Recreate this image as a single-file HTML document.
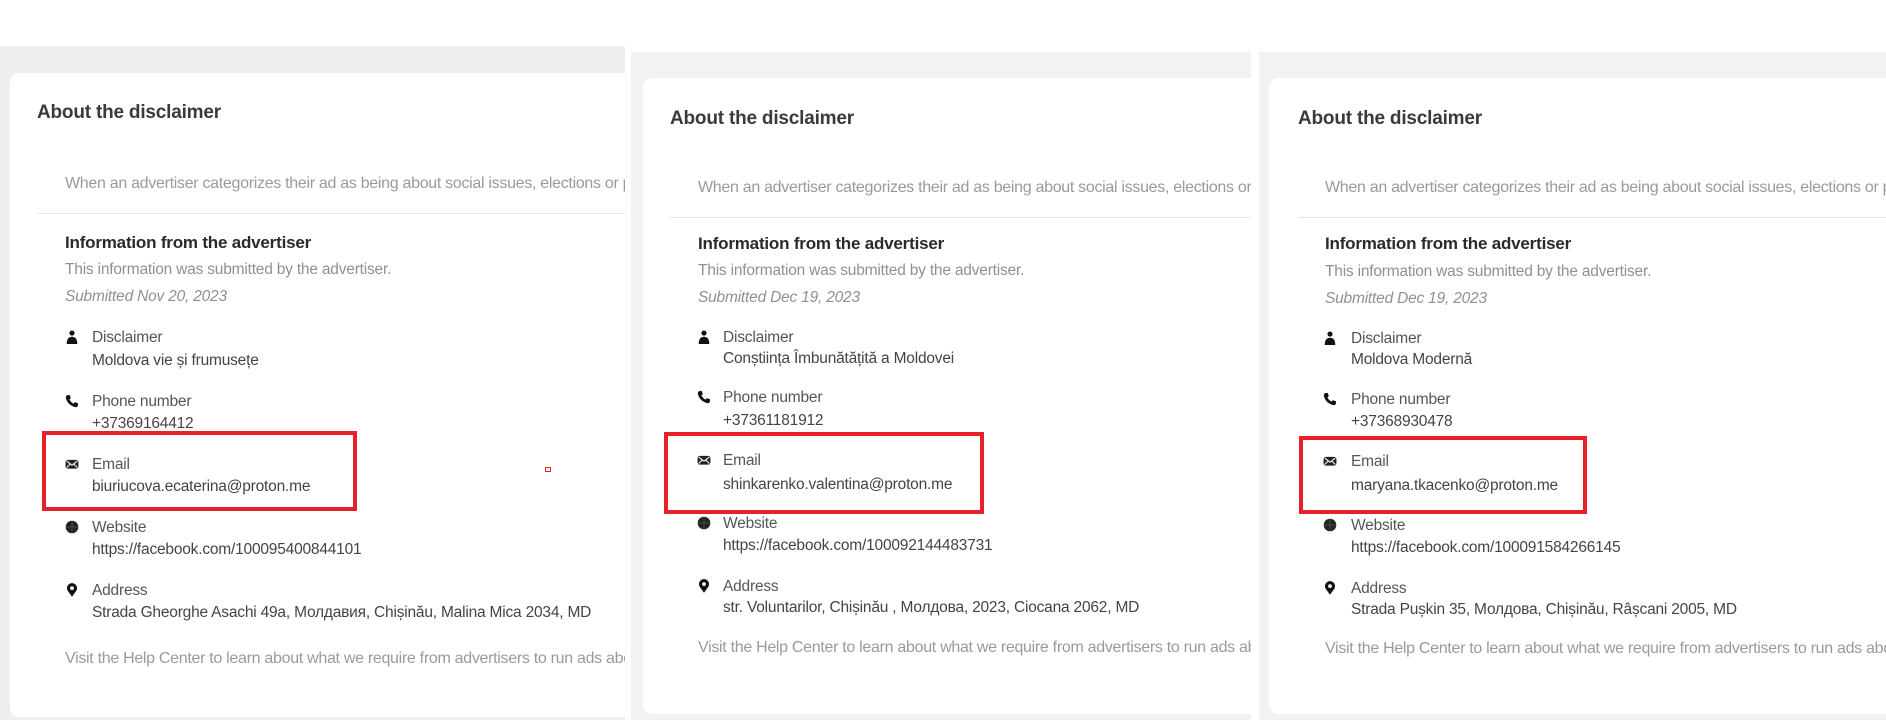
<!DOCTYPE html>
<html><head><meta charset="utf-8"><style>
*{margin:0;padding:0;box-sizing:border-box}
body{width:1886px;height:720px;background:#fff;position:relative;overflow:hidden;font-family:"Liberation Sans",Arial,sans-serif}
.panel{position:absolute;overflow:hidden}
.card{position:absolute;background:#fff;border-radius:9px;width:760px}
.t{position:absolute;white-space:nowrap;line-height:20px}
.title{font-size:19px;font-weight:bold;color:#3a3a3a;letter-spacing:-0.2px}
.desc{font-size:16px;color:#9a9a9a;letter-spacing:-0.3px}
.div{position:absolute;height:1px;background:#e6e6e6;width:740px}
.head{font-size:17px;font-weight:bold;color:#2a2a2a;letter-spacing:-0.2px}
.sub{font-size:15.5px;color:#909090;letter-spacing:-0.2px}
.it{font-style:italic}
.lab{font-size:15.5px;color:#555;letter-spacing:-0.2px}
.val{font-size:15.5px;color:#444;letter-spacing:-0.2px}
.ic{position:absolute;width:14px;height:14px}
.red{position:absolute;border:4px solid #e8202a}
</style></head><body>

<!-- Panel 1 -->
<div class="panel" style="left:0;top:46px;width:625px;height:674px;background:#efefef">
 <div class="card" style="left:10px;top:27px;height:644px">
  <div class="t title" style="left:27px;top:30px">About the disclaimer</div>
  <div class="t desc" style="left:55px;top:101px">When an advertiser categorizes their ad as being about social issues, elections or politics, they are required to...</div>
  <div class="div" style="left:27px;top:140px"></div>
  <div class="t head" style="left:55px;top:160px">Information from the advertiser</div>
  <div class="t sub" style="left:55px;top:187px">This information was submitted by the advertiser.</div>
  <div class="t sub it" style="left:55px;top:214px">Submitted Nov 20, 2023</div>
  <svg class="ic" style="left:55px;top:257px" viewBox="0 0 12 12"><circle cx="6" cy="2.6" r="2.2" fill="#111"/><path d="M1.5 12 Q1.5 5.8 6 5.8 Q10.5 5.8 10.5 12Z" fill="#111"/></svg>
  <div class="t lab" style="left:82px;top:255px">Disclaimer</div>
  <div class="t val" style="left:82px;top:278px">Moldova vie și frumusețe</div>
  <svg class="ic" style="left:55px;top:321px" viewBox="0 0 12 12"><path d="M2 1 L4 0.8 L5 3.5 L3.8 4.6 Q5 7.2 7.4 8.2 L8.5 7 L11.2 8 L11 10.2 Q10.5 11.5 9 11.3 Q2 9.5 0.7 3 Q0.6 1.5 2 1Z" fill="#111"/></svg>
  <div class="t lab" style="left:82px;top:319px">Phone number</div>
  <div class="t val" style="left:82px;top:341px">+37369164412</div>
  <svg class="ic" style="left:55px;top:384px" viewBox="0 0 12 12"><rect x="0.5" y="2.5" width="11" height="7.5" rx="2" fill="#222"/><path d="M1.5 3.5 L6 7 L10.5 3.5 M1.5 9 L4.5 6 M10.5 9 L7.5 6" stroke="#fff" stroke-width="0.9" fill="none"/></svg>
  <div class="t lab" style="left:82px;top:382px">Email</div>
  <div class="t val" style="left:82px;top:404px">biuriucova.ecaterina@proton.me</div>
  <svg class="ic" style="left:55px;top:447px" viewBox="0 0 12 12"><circle cx="6" cy="6" r="5.4" fill="#222"/><path d="M6 0.8 V11.2 M0.8 6 H11.2" stroke="#555" stroke-width="0.7"/></svg>
  <div class="t lab" style="left:82px;top:445px">Website</div>
  <div class="t val" style="left:82px;top:467px">https://facebook.com/100095400844101</div>
  <svg class="ic" style="left:55px;top:510px" viewBox="0 0 12 12"><path d="M6 11.8 L2.4 6.8 A4.3 4.3 0 1 1 9.6 6.8Z" fill="#111"/><circle cx="6" cy="4.4" r="1.6" fill="#fff"/></svg>
  <div class="t lab" style="left:82px;top:508px">Address</div>
  <div class="t val" style="left:82px;top:530px">Strada Gheorghe Asachi 49a, Молдавия, Chișinău, Malina Mica 2034, MD</div>
  <div class="t desc" style="left:55px;top:576px">Visit the Help Center to learn about what we require from advertisers to run ads about social issues...</div>
 </div>
</div>

<!-- Panel 2 -->
<div class="panel" style="left:631px;top:52px;width:620px;height:668px;background:#f2f2f2">
 <div class="card" style="left:12px;top:26px;height:636px">
  <div class="t title" style="left:27px;top:31px">About the disclaimer</div>
  <div class="t desc" style="left:55px;top:100px">When an advertiser categorizes their ad as being about social issues, elections or politics, they are required to...</div>
  <div class="div" style="left:27px;top:139px"></div>
  <div class="t head" style="left:55px;top:156px">Information from the advertiser</div>
  <div class="t sub" style="left:55px;top:183px">This information was submitted by the advertiser.</div>
  <div class="t sub it" style="left:55px;top:210px">Submitted Dec 19, 2023</div>
  <svg class="ic" style="left:54px;top:252px" viewBox="0 0 12 12"><circle cx="6" cy="2.6" r="2.2" fill="#111"/><path d="M1.5 12 Q1.5 5.8 6 5.8 Q10.5 5.8 10.5 12Z" fill="#111"/></svg>
  <div class="t lab" style="left:80px;top:250px">Disclaimer</div>
  <div class="t val" style="left:80px;top:271px">Conștiința Îmbunătățită a Moldovei</div>
  <svg class="ic" style="left:54px;top:312px" viewBox="0 0 12 12"><path d="M2 1 L4 0.8 L5 3.5 L3.8 4.6 Q5 7.2 7.4 8.2 L8.5 7 L11.2 8 L11 10.2 Q10.5 11.5 9 11.3 Q2 9.5 0.7 3 Q0.6 1.5 2 1Z" fill="#111"/></svg>
  <div class="t lab" style="left:80px;top:310px">Phone number</div>
  <div class="t val" style="left:80px;top:333px">+37361181912</div>
  <svg class="ic" style="left:54px;top:375px" viewBox="0 0 12 12"><rect x="0.5" y="2.5" width="11" height="7.5" rx="2" fill="#222"/><path d="M1.5 3.5 L6 7 L10.5 3.5 M1.5 9 L4.5 6 M10.5 9 L7.5 6" stroke="#fff" stroke-width="0.9" fill="none"/></svg>
  <div class="t lab" style="left:80px;top:373px">Email</div>
  <div class="t val" style="left:80px;top:397px">shinkarenko.valentina@proton.me</div>
  <svg class="ic" style="left:54px;top:438px" viewBox="0 0 12 12"><circle cx="6" cy="6" r="5.4" fill="#222"/><path d="M6 0.8 V11.2 M0.8 6 H11.2" stroke="#555" stroke-width="0.7"/></svg>
  <div class="t lab" style="left:80px;top:436px">Website</div>
  <div class="t val" style="left:80px;top:458px">https://facebook.com/100092144483731</div>
  <svg class="ic" style="left:54px;top:501px" viewBox="0 0 12 12"><path d="M6 11.8 L2.4 6.8 A4.3 4.3 0 1 1 9.6 6.8Z" fill="#111"/><circle cx="6" cy="4.4" r="1.6" fill="#fff"/></svg>
  <div class="t lab" style="left:80px;top:499px">Address</div>
  <div class="t val" style="left:80px;top:520px">str. Voluntarilor, Chișinău , Молдова, 2023, Ciocana 2062, MD</div>
  <div class="t desc" style="left:55px;top:560px">Visit the Help Center to learn about what we require from advertisers to run ads about social issues...</div>
 </div>
</div>

<!-- Panel 3 -->
<div class="panel" style="left:1259px;top:52px;width:627px;height:668px;background:#f2f2f2">
 <div class="card" style="left:10px;top:26px;height:636px">
  <div class="t title" style="left:29px;top:31px">About the disclaimer</div>
  <div class="t desc" style="left:56px;top:100px">When an advertiser categorizes their ad as being about social issues, elections or politics, they are required to...</div>
  <div class="div" style="left:29px;top:139px"></div>
  <div class="t head" style="left:56px;top:156px">Information from the advertiser</div>
  <div class="t sub" style="left:56px;top:184px">This information was submitted by the advertiser.</div>
  <div class="t sub it" style="left:56px;top:211px">Submitted Dec 19, 2023</div>
  <svg class="ic" style="left:54px;top:253px" viewBox="0 0 12 12"><circle cx="6" cy="2.6" r="2.2" fill="#111"/><path d="M1.5 12 Q1.5 5.8 6 5.8 Q10.5 5.8 10.5 12Z" fill="#111"/></svg>
  <div class="t lab" style="left:82px;top:251px">Disclaimer</div>
  <div class="t val" style="left:82px;top:272px">Moldova Modernă</div>
  <svg class="ic" style="left:54px;top:314px" viewBox="0 0 12 12"><path d="M2 1 L4 0.8 L5 3.5 L3.8 4.6 Q5 7.2 7.4 8.2 L8.5 7 L11.2 8 L11 10.2 Q10.5 11.5 9 11.3 Q2 9.5 0.7 3 Q0.6 1.5 2 1Z" fill="#111"/></svg>
  <div class="t lab" style="left:82px;top:312px">Phone number</div>
  <div class="t val" style="left:82px;top:334px">+37368930478</div>
  <svg class="ic" style="left:54px;top:376px" viewBox="0 0 12 12"><rect x="0.5" y="2.5" width="11" height="7.5" rx="2" fill="#222"/><path d="M1.5 3.5 L6 7 L10.5 3.5 M1.5 9 L4.5 6 M10.5 9 L7.5 6" stroke="#fff" stroke-width="0.9" fill="none"/></svg>
  <div class="t lab" style="left:82px;top:374px">Email</div>
  <div class="t val" style="left:82px;top:398px">maryana.tkacenko@proton.me</div>
  <svg class="ic" style="left:54px;top:440px" viewBox="0 0 12 12"><circle cx="6" cy="6" r="5.4" fill="#222"/><path d="M6 0.8 V11.2 M0.8 6 H11.2" stroke="#555" stroke-width="0.7"/></svg>
  <div class="t lab" style="left:82px;top:438px">Website</div>
  <div class="t val" style="left:82px;top:460px">https://facebook.com/100091584266145</div>
  <svg class="ic" style="left:54px;top:503px" viewBox="0 0 12 12"><path d="M6 11.8 L2.4 6.8 A4.3 4.3 0 1 1 9.6 6.8Z" fill="#111"/><circle cx="6" cy="4.4" r="1.6" fill="#fff"/></svg>
  <div class="t lab" style="left:82px;top:501px">Address</div>
  <div class="t val" style="left:82px;top:522px">Strada Pușkin 35, Молдова, Chișinău, Râșcani 2005, MD</div>
  <div class="t desc" style="left:56px;top:561px">Visit the Help Center to learn about what we require from advertisers to run ads about social issues...</div>
 </div>
</div>

<div class="red" style="left:42px;top:431px;width:315px;height:80px"></div>
<div class="red" style="left:664px;top:432px;width:320px;height:82px"></div>
<div class="red" style="left:1299px;top:436px;width:288px;height:78px"></div>
<div style="position:absolute;left:545px;top:467px;width:6px;height:5px;border:1.5px solid #e8202a"></div>
</body></html>
